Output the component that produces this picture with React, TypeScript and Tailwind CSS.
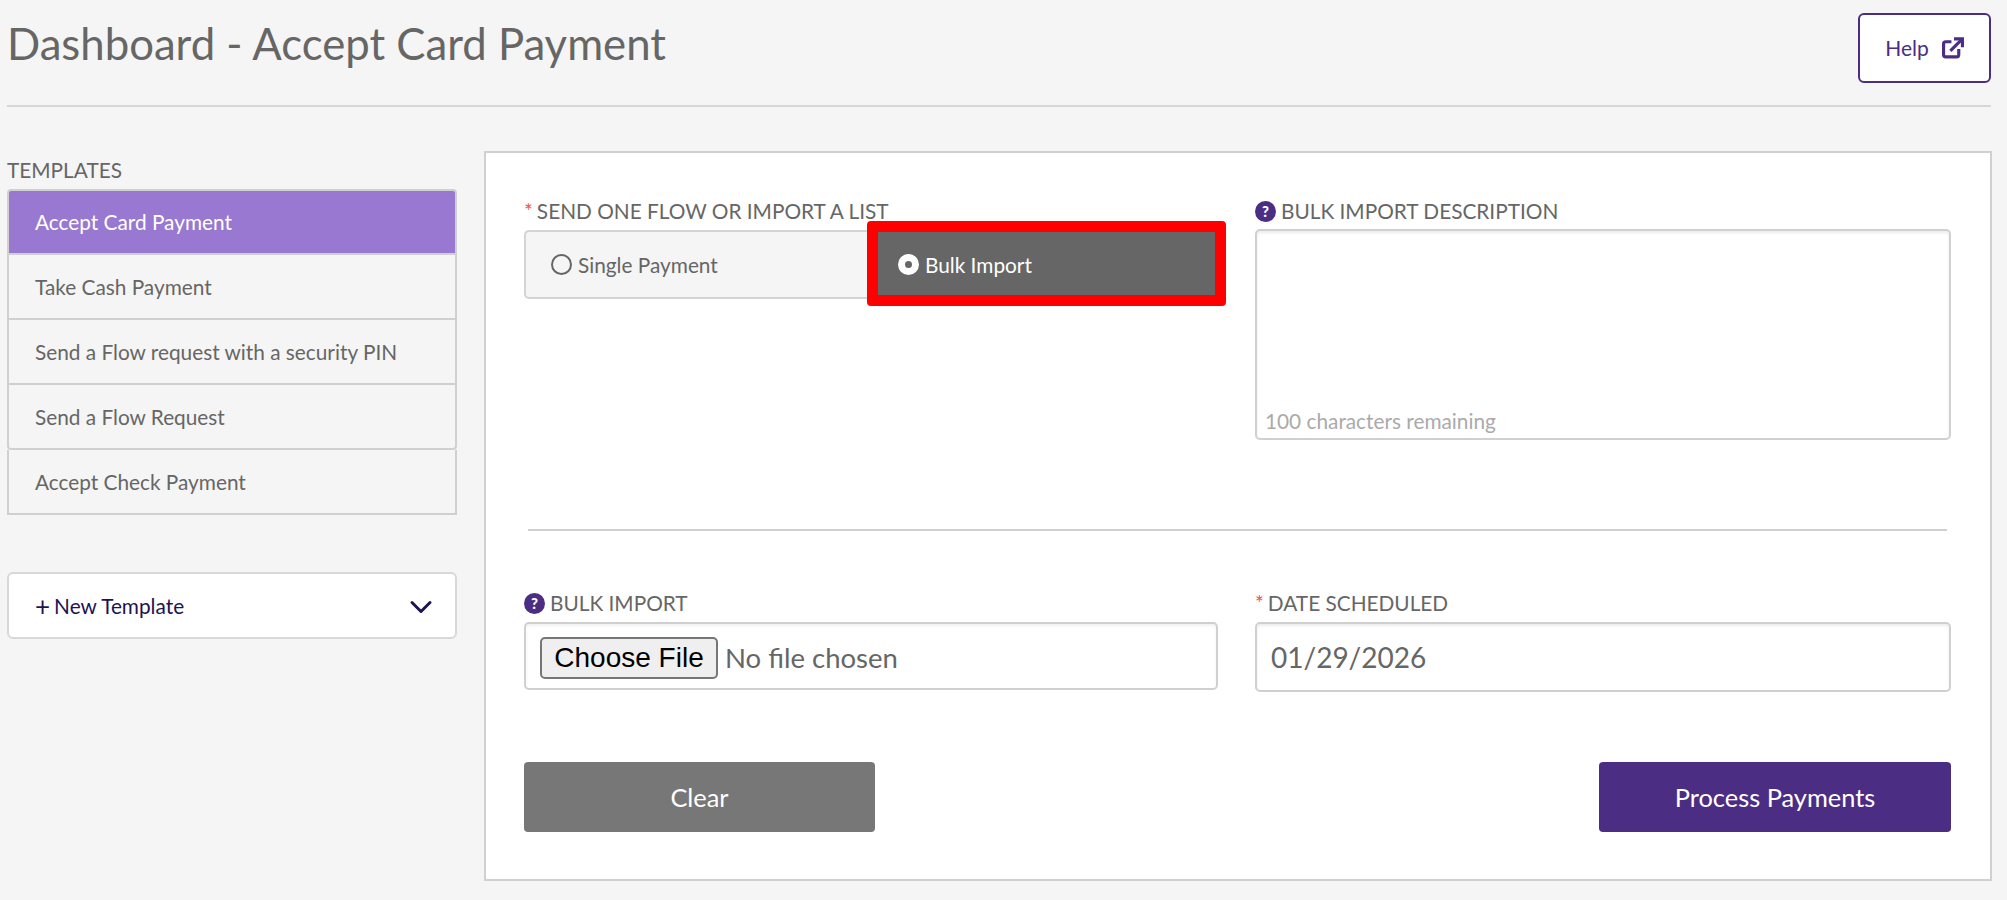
import React from "react";
import { ChevronDown } from "lucide-react";

const Q = () => (
  <span className="w-[21px] h-[21px] shrink-0 rounded-full bg-[#4b2e83] text-white text-[15px] font-black leading-none flex items-center justify-center">?</span>
);

function FieldLabel({ icon, children }: { icon: "q" | "star"; children: React.ReactNode }) {
  return (
    <div className="flex items-center h-[24px] text-[20.8px] text-[#666] gap-[5px] leading-none">
      {icon === "q" ? <Q /> : <span className="text-[#f0524f] -mr-[1px]">*</span>}
      <span>{children}</span>
    </div>
  );
}

const templates = ["Accept Card Payment", "Take Cash Payment", "Send a Flow request with a security PIN", "Send a Flow Request", "Accept Check Payment"];

export default function App() {
  return (
    <div className="w-full h-[900px] bg-[#f5f5f5] pl-[7px] pr-4 overflow-hidden text-[#666]" style={{ fontFamily: "Lato, 'Liberation Sans', sans-serif" }}>
      <header className="h-[107px] border-b-2 border-[#d6d6d6] flex justify-between items-start">
        <h1 className="text-[43.7px] leading-[50px] mt-[18px] font-normal text-[#666]">Dashboard - Accept Card Payment</h1>
        <button className="mt-[13px] w-[133px] h-[70px] border-2 border-[#4b2e83] rounded-[6px] bg-white text-[#4b2e83] text-[21px] flex items-center justify-center gap-[13px]">
          Help
          <svg width="22" height="22" viewBox="0 0 21 21" fill="none" stroke="currentColor" strokeWidth="3" aria-hidden="true">
            <path d="M9 4.5H3.5a2 2 0 0 0-2 2v10.5a2 2 0 0 0 2 2h10.5a2 2 0 0 0 2-2v-5.5" />
            <path d="M8 13.2 19 2.2" />
            <path d="M11.5 1.8h8v8" />
          </svg>
        </button>
      </header>

      <div className="flex items-start pt-[44px]">
        <aside className="w-[450px] shrink-0 pt-[7px]">
          <div className="text-[20.8px] leading-[24px] text-[#666] mb-[7px]">TEMPLATES</div>
          <div className="flex flex-col">
            {templates.map((t, i) => (
              <div
                key={t}
                className={
                  "flex items-center pl-[26px] text-[20.8px] border-2 border-[#d0d0d0] " +
                  (i === 0 ? "h-[66px] bg-[#9878d0] text-white rounded-t-[4px] " : "h-[65px] text-[#666] border-t-0 ") +
                  (i === 3 ? "rounded-b-[4px]" : "")
                }
              >
                {t}
              </div>
            ))}
          </div>
          <button className="mt-[57px] w-full h-[67px] bg-white border-2 border-[#d8d8d8] rounded-[6px] flex items-center justify-between pl-[26px] pr-[16px] text-[20.8px] text-[#1d1452]">
            <span className="flex items-center">
              <span className="text-[26px] leading-none mr-[4px]">+</span>
              New Template
            </span>
            <ChevronDown className="w-[36px] h-[36px] mt-[3px]" strokeWidth={2} />
          </button>
        </aside>

        <main className="ml-[27px] flex-1 h-[730px] bg-white border-2 border-[#d0d0d0] pl-[38px] pr-[39px] pt-[46px]">
          <div className="grid grid-cols-[694px_696px] gap-x-[37px] items-start">
            <div>
              <FieldLabel icon="star">SEND ONE FLOW OR IMPORT A LIST</FieldLabel>
              <div className="flex h-[69px] mt-[7px]">
                <div className="w-[354px] shrink-0 bg-[#f5f5f5] border-2 border-r-0 border-[#d4d4d4] rounded-l-[5px] flex items-center pl-[25px] gap-[6px] text-[20.8px]">
                  <span className="w-[21px] h-[21px] rounded-full border-2 border-[#666]" />
                  Single Payment
                </div>
                <div className="-ml-[11px] -mt-[9px] -mb-[7px] -mr-[8px] flex-1 border-[11px] border-[#ff0000] rounded-[4px] bg-[#666] text-white flex items-center pl-[20px] pt-[2px] gap-[6px] text-[20.8px]">
                  <span className="w-[21px] h-[21px] rounded-full border-[7px] border-white bg-[#666]" />
                  Bulk Import
                </div>
              </div>
            </div>
            <div>
              <FieldLabel icon="q">BULK IMPORT DESCRIPTION</FieldLabel>
              <div className="h-[211px] mt-[6px] border-2 border-[#d0d0d0] rounded-[5px] bg-white shadow-[inset_0_2px_3px_rgba(0,0,0,0.08)] flex items-end pl-[8px] pb-[2px] text-[20.8px] text-[#aaa]">
                100 characters remaining
              </div>
            </div>
          </div>

          <div className="h-[2px] bg-[#d0d0d0] mt-[89px] ml-[4px] mr-[4px]" />

          <div className="grid grid-cols-[694px_696px] gap-x-[37px] items-start mt-[60px]">
            <div>
              <FieldLabel icon="q">BULK IMPORT</FieldLabel>
              <div className="h-[68px] mt-[7px] border-2 border-[#d0d0d0] rounded-[5px] bg-white flex items-center pl-[14px] pt-[4px] gap-[7px] shadow-[inset_0_2px_3px_rgba(0,0,0,0.06)]">
                <button className="w-[178px] h-[42px] bg-[#efefef] border-2 border-[#767676] rounded-[5px] text-black text-[28px] leading-none" style={{ fontFamily: "'Liberation Sans', sans-serif" }}>
                  Choose File
                </button>
                <span className="text-[27.5px] text-[#666]">No file chosen</span>
              </div>
            </div>
            <div>
              <FieldLabel icon="star">DATE SCHEDULED</FieldLabel>
              <div className="h-[70px] mt-[7px] border-2 border-[#d0d0d0] rounded-[5px] bg-white flex items-center pl-[14px] text-[28px] text-[#666] shadow-[inset_0_2px_3px_rgba(0,0,0,0.08)]">
                01/29/2026
              </div>
            </div>
          </div>

          <div className="flex justify-between mt-[70px] w-[1427px]">
            <button className="w-[351px] h-[70px] bg-[#777] rounded-[4px] text-white text-[25.4px]">Clear</button>
            <button className="w-[352px] h-[70px] bg-[#4b2e83] rounded-[4px] text-white text-[25.4px]">Process Payments</button>
          </div>
        </main>
      </div>
    </div>
  );
}
